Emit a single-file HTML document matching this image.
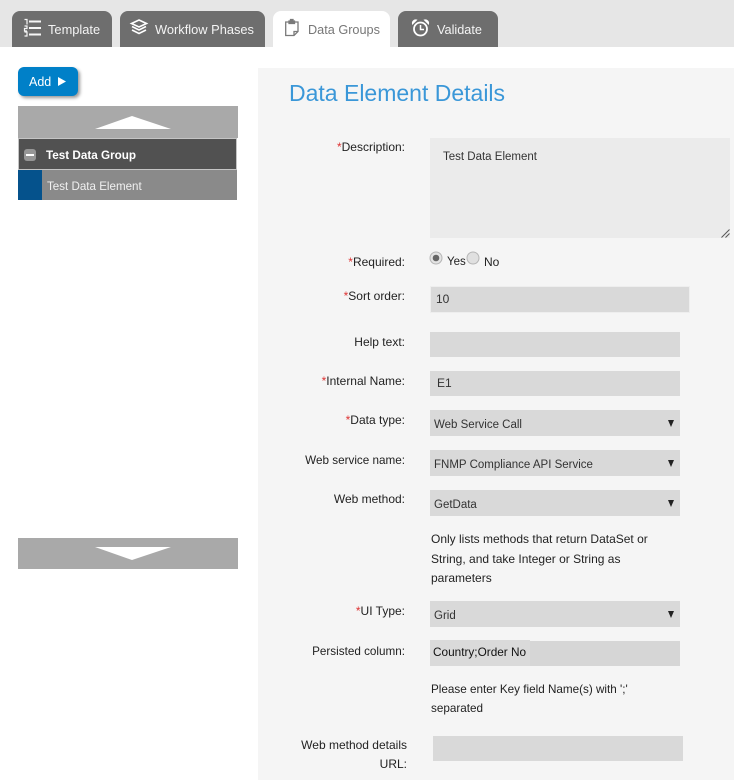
<!DOCTYPE html>
<html><head><meta charset="utf-8"><style>
html,body{margin:0;padding:0;background:#fff}
body{width:734px;height:780px;position:relative;overflow:hidden;font-family:"Liberation Sans",sans-serif;font-size:12px;color:#222}
div,span{position:absolute;white-space:nowrap}
svg{position:absolute;overflow:visible}
.tab{top:11px;height:36px;background:#6e6e6e;border-radius:8px 8px 0 0}
.tt{top:22px;font-size:12.85px;line-height:16px;color:#f4f4f4}
.l{right:329px;text-align:right;line-height:16px;color:#222}
.l i{color:#d33;font-style:normal}
.f{background:#d9d9d9;line-height:25px;color:#333}
.s{left:430px;width:250px;height:26px}
.s b{position:absolute;left:4px;top:2px;font-weight:normal;font-size:11.5px;line-height:26px}
.s u{position:absolute;left:238px;top:10px;width:0;height:0;border:3.5px solid transparent;border-top:7px solid #222;border-bottom:0}
.n{left:431px;line-height:19.5px;color:#222}
</style></head><body>
<div style="left:0;top:0;width:734px;height:47px;background:#e6e6e6"></div>
<div class="tab" style="left:12px;width:100px"></div>
<div class="tab" style="left:120px;width:145px"></div>
<div class="tab" style="left:273px;width:117px;background:#fff"></div>
<div class="tab" style="left:398px;width:100px"></div>
<svg style="left:24px;top:19px" width="18" height="18" viewBox="0 0 18 18" fill="none" stroke="#f6f6f6"><path d="M5 2.500H17M5 9H17M5 15.500H17" stroke-width="2"/><path d="M0.500 0.500H3V5.500M0.500 7H3V9.500H0.500V12H3M0.500 13H3V17H0.500" stroke-width="1.200"/></svg>
<svg style="left:130px;top:19px" width="18" height="17" viewBox="0 0 18 17" fill="none" stroke="#fff" stroke-width="1.600"><path d="M9 1L16.500 4.500L9 8L1.500 4.500Z"/><path d="M2 7.500L9 11L16 7.500M2 11L9 14.500L16 11"/></svg>
<svg style="left:285px;top:19px" width="14" height="18" viewBox="0 0 14 18" fill="none" stroke="#7a7a7a" stroke-width="1.300"><path d="M3.500 3H0.700V16.500H9L13 12.500V3H10"/><path d="M9 16.500V12.500H13"/><path d="M4 4.500V2H5.500V0.500H8V2H9.500V4.500Z" fill="#7a7a7a"/></svg>
<svg style="left:412px;top:19px" width="17" height="18" viewBox="0 0 17 18" fill="none" stroke="#fff"><circle cx="8.500" cy="10" r="6.500" stroke-width="1.800"/><path d="M8.500 6V10.500H12" stroke-width="1.500"/><path d="M0.500 5C0 2.500 2 0.500 4.500 1ZM16.500 5C17 2.500 15 0.500 12.500 1Z" fill="#fff"/></svg>
<div class="tt" style="left:48px">Template</div>
<div class="tt" style="left:155px">Workflow Phases</div>
<div class="tt" style="left:308px;color:#777;font-size:12.7px">Data Groups</div>
<div class="tt" style="left:437px;font-size:12.7px">Validate</div>

<div style="left:18px;top:67px;width:60px;height:29px;background:#0080c8;border-radius:6px;box-shadow:2px 2px 3px #999"></div>
<div style="left:29px;top:74px;color:#fff;font-size:12.5px;line-height:16px">Add</div>
<svg style="left:58px;top:77px" width="8" height="9"><path d="M0 0L8 4.500L0 9Z" fill="#fff"/></svg>

<div style="left:18px;top:106px;width:220px;height:32px;background:#a9a9a9"></div>
<svg style="left:95px;top:116px" width="76" height="13"><path d="M0 13L37 0L76 13Z" fill="#fff"/></svg>
<div style="left:18px;top:138px;width:219px;height:32px;background:#515151;border:1px solid #c4c4c4;box-sizing:border-box"></div>
<div style="left:24px;top:149px;width:12px;height:12px;background:#969696;border-radius:3px"></div>
<div style="left:26px;top:154px;width:8px;height:2px;background:#fff"></div>
<div style="left:46px;top:148px;color:#fff;font-weight:bold;line-height:16px;font-size:11.7px">Test Data Group</div>
<div style="left:18px;top:170px;width:219px;height:30px;background:#8a8a8a"></div>
<div style="left:18px;top:170px;width:24px;height:30px;background:#05528c"></div>
<div style="left:47px;top:179px;color:#f0f0f0;line-height:16px;font-size:11.6px">Test Data Element</div>
<div style="left:18px;top:538px;width:220px;height:31px;background:#a9a9a9"></div>
<svg style="left:95px;top:547px" width="76" height="13"><path d="M0 0L37 13L76 0Z" fill="#fff"/></svg>

<div style="left:258px;top:68px;width:476px;height:712px;background:#f5f5f5"></div>
<div style="left:289px;top:78px;font-size:23px;line-height:30px;color:#3a97d8">Data Element Details</div>

<div class="l" style="top:139px"><i>*</i>Description:</div>
<div style="left:430px;top:138px;width:300px;height:100px;background:#ebebeb"></div>
<svg style="left:721px;top:229px" width="9" height="9" stroke="#555" fill="none"><path d="M0.500 8.500L8.500 0.500M4.500 8.500L8.500 4.500"/></svg>
<div style="left:443px;top:149px;line-height:16px;color:#333;font-size:11.5px">Test Data Element</div>

<div class="l" style="top:254px"><i>*</i>Required:</div>
<svg style="left:429px;top:251px" width="14" height="14"><circle cx="7" cy="7" r="6" fill="#e4e4e4" stroke="#b5b5b5"/><circle cx="7" cy="7" r="3.300" fill="#666"/></svg>
<div style="left:447px;top:254px;line-height:16px;font-size:11.5px">Yes</div>
<svg style="left:466px;top:251px" width="14" height="14"><circle cx="7" cy="7" r="6" fill="#e0e0e0" stroke="#b5b5b5"/></svg>
<div style="left:484px;top:254px;line-height:16px">No</div>

<div class="l" style="top:288px"><i>*</i>Sort order:</div>
<div class="f" style="left:430px;top:286px;width:258px;height:25px;border:1px solid #eee"><span style="left:5px;top:0">10</span></div>
<div class="l" style="top:334px">Help text:</div>
<div class="f" style="left:430px;top:332px;width:250px;height:25px"></div>
<div class="l" style="top:373px"><i>*</i>Internal Name:</div>
<div class="f" style="left:430px;top:371px;width:250px;height:25px"><span style="left:7px;top:0">E1</span></div>

<div class="l" style="top:412px"><i>*</i>Data type:</div>
<div class="f s" style="top:410px"><b>Web Service Call</b><u></u></div>
<div class="l" style="top:453px;font-size:11.7px">Web service name:</div>
<div class="f s" style="top:450px"><b style="font-size:11.5px">FNMP Compliance API Service</b><u></u></div>
<div class="l" style="top:491px">Web method:</div>
<div class="f s" style="top:490px"><b>GetData</b><u></u></div>
<div class="n" style="top:530px">Only lists methods that return DataSet or<br>String, and take Integer or String as<br>parameters</div>
<div class="l" style="top:603px"><i>*</i>UI Type:</div>
<div class="f s" style="top:601px"><b>Grid</b><u></u></div>
<div class="l" style="top:644px;font-size:11.7px">Persisted column:</div>
<div class="f" style="left:430px;top:641px;width:250px;height:25px;background:#d6d6d6"></div>
<div style="left:430px;top:640px;width:100px;height:26px;background:#dadada"></div>
<span style="left:433px;top:644px;line-height:16px;color:#111;font-size:11.8px">Country;Order No</span>
<div class="n" style="top:680px;font-size:11.7px;line-height:19px">Please enter Key field Name(s) with ';'<br>separated</div>
<div class="l" style="top:736px;line-height:19px;right:327px">Web method details<br>URL:</div>
<div class="f" style="left:433px;top:736px;width:250px;height:25px"></div>
</body></html>
